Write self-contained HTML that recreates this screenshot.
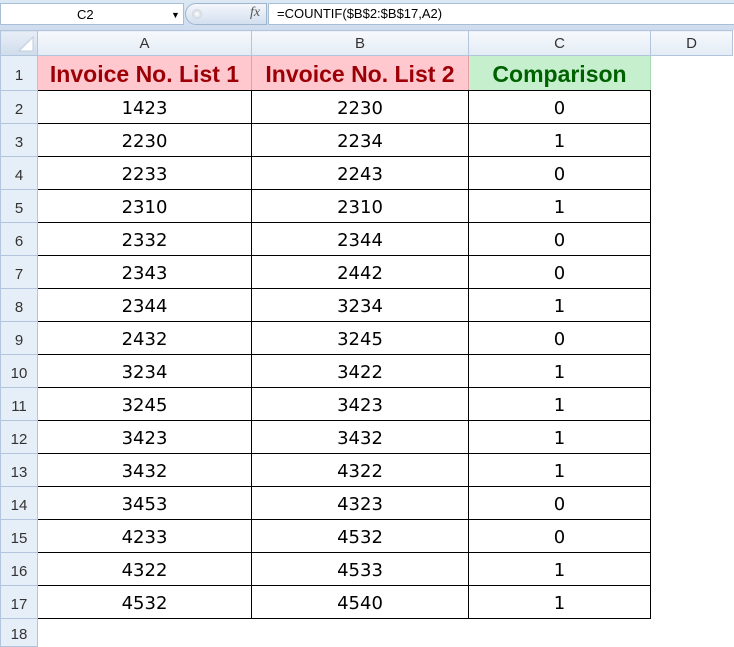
<!DOCTYPE html>
<html><head><style>
body{margin:0;width:734px;height:647px;overflow:hidden;background:#fff;font-family:"Liberation Sans",sans-serif;position:relative}
.abs{position:absolute}
.fb{left:0;top:0;width:734px;height:30px;background:linear-gradient(#dde8f5,#cfdcee)}
.nb{left:0;top:3px;width:184px;height:22px;background:#fff;border:1px solid #a9bfd6;font-size:13px;line-height:22px;box-sizing:border-box}
.fx{left:268px;top:3px;width:466px;height:22px;background:#fff;border:1px solid #a9bfd6;border-right:none;box-sizing:border-box;font-size:13px;line-height:20px;padding-left:8px}
.btn{left:185px;top:3px;width:82px;height:22px;border-radius:11px 0 0 11px;background:linear-gradient(#f4f7fb,#d3dff0);border:1px solid #9fb5cf;box-sizing:border-box}
table{position:absolute;left:0;top:30px;border-collapse:collapse;table-layout:fixed}
td{padding:0;text-align:center;font-family:"DejaVu Sans","Liberation Sans",sans-serif;font-size:18px;overflow:hidden;white-space:nowrap;padding-top:2px}
.h{background:linear-gradient(#f6f9fc,#e3ebf5);border:1px solid #b3c5dc;color:#333;font-family:"Liberation Sans",sans-serif;font-size:15px;padding-top:0}
.r{background:#e6eef8;border:1px solid #b3c5dc;color:#333;font-family:"Liberation Sans",sans-serif;font-size:15px;padding-top:4px}
.c{border:1px solid #000}
.p{background:#ffc7ce;color:#9c0006;font-weight:bold;font-family:"Liberation Sans",sans-serif;font-size:23px;border:1px solid #e0a0a8;border-bottom:1px solid #000}
.g{background:#c6efce;color:#006100;font-weight:bold;font-family:"Liberation Sans",sans-serif;font-size:23px;border:1px solid #a8d8b0;border-bottom:1px solid #000}
.e{border:none}
</style></head><body>
<div class="abs fb"></div>
<div class="abs nb"><span style="position:absolute;left:76px">C2</span><span style="position:absolute;left:170px;font-size:9px">&#9660;</span></div>
<div class="abs btn"><div class="abs" style="left:6px;top:5px;width:10px;height:10px;border-radius:50%;background:radial-gradient(#fff,#b8c3d0)"></div><span class="abs" style="left:64px;top:1px;font-family:'Liberation Serif',serif;font-style:italic;font-size:14px;color:#555">fx</span></div>
<div class="abs fx">=COUNTIF($B$2:$B$17,A2)</div>
<table>
<colgroup><col style="width:37px"><col style="width:214px"><col style="width:217px"><col style="width:182px"><col style="width:82px"></colgroup>
<tr style="height:25px"><td class="h" style="background:linear-gradient(#e8eef6,#cfdcec)"><svg width="20" height="20" style="display:block;margin-left:14px"><polygon points="18,4 18,18 4,18" fill="#fff" stroke="#c0cddd"/></svg></td><td class="h">A</td><td class="h">B</td><td class="h">C</td><td class="h">D</td></tr>
<tr style="height:35px"><td class="r">1</td><td class="p">Invoice No. List 1</td><td class="p">Invoice No. List 2</td><td class="g">Comparison</td><td class="e"></td></tr>
<tr style="height:33px"><td class="r">2</td><td class="c">1423</td><td class="c">2230</td><td class="c">0</td><td class="e"></td></tr>
<tr style="height:33px"><td class="r">3</td><td class="c">2230</td><td class="c">2234</td><td class="c">1</td><td class="e"></td></tr>
<tr style="height:33px"><td class="r">4</td><td class="c">2233</td><td class="c">2243</td><td class="c">0</td><td class="e"></td></tr>
<tr style="height:33px"><td class="r">5</td><td class="c">2310</td><td class="c">2310</td><td class="c">1</td><td class="e"></td></tr>
<tr style="height:33px"><td class="r">6</td><td class="c">2332</td><td class="c">2344</td><td class="c">0</td><td class="e"></td></tr>
<tr style="height:33px"><td class="r">7</td><td class="c">2343</td><td class="c">2442</td><td class="c">0</td><td class="e"></td></tr>
<tr style="height:33px"><td class="r">8</td><td class="c">2344</td><td class="c">3234</td><td class="c">1</td><td class="e"></td></tr>
<tr style="height:33px"><td class="r">9</td><td class="c">2432</td><td class="c">3245</td><td class="c">0</td><td class="e"></td></tr>
<tr style="height:33px"><td class="r">10</td><td class="c">3234</td><td class="c">3422</td><td class="c">1</td><td class="e"></td></tr>
<tr style="height:33px"><td class="r">11</td><td class="c">3245</td><td class="c">3423</td><td class="c">1</td><td class="e"></td></tr>
<tr style="height:33px"><td class="r">12</td><td class="c">3423</td><td class="c">3432</td><td class="c">1</td><td class="e"></td></tr>
<tr style="height:33px"><td class="r">13</td><td class="c">3432</td><td class="c">4322</td><td class="c">1</td><td class="e"></td></tr>
<tr style="height:33px"><td class="r">14</td><td class="c">3453</td><td class="c">4323</td><td class="c">0</td><td class="e"></td></tr>
<tr style="height:33px"><td class="r">15</td><td class="c">4233</td><td class="c">4532</td><td class="c">0</td><td class="e"></td></tr>
<tr style="height:33px"><td class="r">16</td><td class="c">4322</td><td class="c">4533</td><td class="c">1</td><td class="e"></td></tr>
<tr style="height:33px"><td class="r">17</td><td class="c">4532</td><td class="c">4540</td><td class="c">1</td><td class="e"></td></tr>
<tr style="height:28px"><td class="r">18</td><td class="e"></td><td class="e"></td><td class="e"></td><td class="e"></td></tr>
</table>
</body></html>
